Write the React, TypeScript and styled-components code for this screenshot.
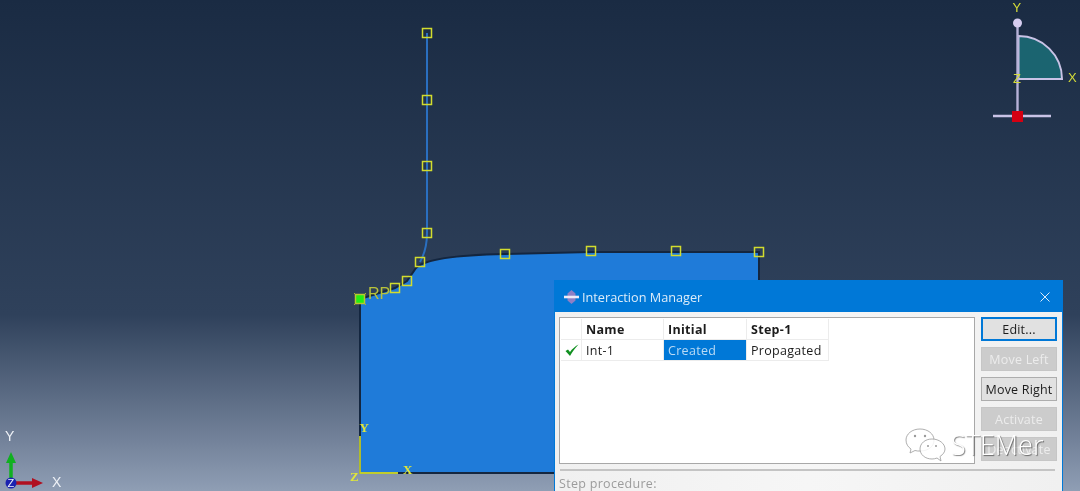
import React from "react";
import styled, { createGlobalStyle } from "styled-components";

const GlobalStyle = createGlobalStyle`
  html, body {
    margin: 0;
    padding: 0;
    width: 100%;
    height: 100%;
    overflow: hidden;
  }
  #root {
    width: 100%;
    height: 100%;
  }
`;

const Viewport = styled.div`
  position: relative;
  width: 1080px;
  height: 491px;
  overflow: hidden;
  font-family: "Open Sans", "Noto Sans", sans-serif;
  filter: blur(0.4px);
  background: linear-gradient(180deg, #1a2b43 0%, #2f415b 64%, #74839b 90%, #8f9eb4 100%);
`;

const ModelCanvas = styled.svg`
  position: absolute;
  left: 0;
  top: 0;
  width: 1080px;
  height: 491px;
`;

const Dialog = styled.div`
  position: absolute;
  left: 554px;
  top: 280px;
  width: 509px;
  height: 211px;
  display: flex;
  flex-direction: column;
  background: #f0f0f0;
  border: 1px solid #0078d7;
  border-bottom: none;
  box-sizing: border-box;
`;

const TitleBar = styled.div`
  height: 31px;
  flex: none;
  display: flex;
  align-items: center;
  padding: 0 12px 0 9px;
  gap: 3px;
  background: #0078d7;
  color: #dcecf9;
  font-size: 12.7px;
`;

const TitleText = styled.span`
  flex: 1;
`;

const Body = styled.div`
  flex: 1;
  display: flex;
  flex-direction: column;
  padding: 5px 5px 0 4px;
  background: linear-gradient(90deg, #f0f0f0, #f6f6f6 50%, #f0f0f0);
`;

const MainRow = styled.div`
  display: flex;
  gap: 6px;
  height: 147px;
`;

const TablePanel = styled.div`
  width: 416px;
  box-sizing: border-box;
  background: #fff;
  border: 1px solid #a8a8a8;
  padding: 1px;
`;

const Grid = styled.div`
  display: grid;
  grid-template-columns: 21px 82px 83px 82px;
  grid-auto-rows: 21px;
  width: max-content;
  font-size: 12.5px;
  color: #1c1c1c;
`;

const Cell = styled.div<{ $head?: boolean; $selected?: boolean }>`
  display: flex;
  align-items: center;
  padding-left: 4px;
  box-sizing: border-box;
  border-right: 1px solid #ececec;
  border-bottom: 1px solid #ececec;
  font-weight: ${({ $head }) => ($head ? 700 : 400)};
  background: ${({ $selected }) => ($selected ? "#0078d7" : "#fff")};
  color: ${({ $selected }) => ($selected ? "#b9daf5" : "#1c1c1c")};
  letter-spacing: 0.3px;
`;

const ButtonColumn = styled.div`
  width: 76px;
  display: flex;
  flex-direction: column;
  gap: 6px;
`;

const ActionButton = styled.div<{ $disabled?: boolean; $focused?: boolean }>`
  height: 24px;
  box-sizing: border-box;
  display: flex;
  align-items: center;
  justify-content: center;
  font-size: 12.5px;
  letter-spacing: 0.2px;
  white-space: nowrap;
  background: ${({ $disabled }) => ($disabled ? "#cccccc" : "#e1e1e1")};
  color: ${({ $disabled }) => ($disabled ? "#ececec" : "#1c1c1c")};
  border: ${({ $focused, $disabled }) =>
    $focused ? "2px solid #0078d7" : $disabled ? "1px solid #c6c6c6" : "1px solid #adadad"};
`;

const Divider = styled.div`
  height: 2px;
  margin: 5px 2px 0 1px;
  background: #c4c4c4;
`;

const StepLabel = styled.div`
  margin-top: 4px;
  font-size: 12.5px;
  color: #9c9c9c;
  letter-spacing: 0.3px;
`;

const Watermark = styled.div`
  position: absolute;
  left: 905px;
  top: 426px;
  display: flex;
  align-items: center;
  gap: 4px;
  color: #fff;
  font-family: "Open Sans", sans-serif;
  font-weight: 300;
  font-size: 27px;
  text-shadow: 1px 1px 1px rgba(0, 0, 0, 0.5);
`;

const handles: [number, number][] = [
  [427, 33],
  [427, 100],
  [427, 166],
  [427, 233],
  [420, 262],
  [407, 281],
  [395, 288],
  [505, 254],
  [591, 251],
  [676, 251],
  [759, 252],
];

function Model() {
  return (
    <ModelCanvas viewBox="0 0 1080 491">
      {/* part */}
      <path
        d="M360 473 L360 299 L395 288 L407 281 L416 268 C424 260 450 255 505 254 L591 252 L759 252 L759 300 L759 473 Z"
        fill="#1f7bd9"
        stroke="#14263f"
        strokeWidth="2"
      />
      <path d="M427 33 L427 233 C427 245 424 255 420 262" fill="none" stroke="#2a6fc0" strokeWidth="2" />

      {/* datum csys */}
      <path d="M360 436 L360 473 L398 473" fill="none" stroke="#c0cc2c" strokeWidth="1.8" />
      <g fontFamily="'Liberation Serif', serif" fontWeight="700" fontSize="13" fill="#dfe63c">
        <text x="359.5" y="432">Y</text>
        <text x="403" y="474">X</text>
        <text x="350" y="481">Z</text>
      </g>

      {/* reference point and handles */}
      <g stroke="#d2dc2e" strokeWidth="1.5" fill="none">
        {handles.map(([x, y]) => (
          <rect key={`${x}-${y}`} x={x - 4.5} y={y - 4.5} width="9" height="9" />
        ))}
        <path d="M354 293 L366 305 M366 293 L354 305" strokeWidth="1" stroke="#a8b030" />
        <rect x="355.5" y="294.5" width="9" height="9" fill="#22ee14" stroke="#b8c830" />
      </g>
      <text x="368" y="299" fontFamily="'Liberation Sans', sans-serif" fontSize="16" fill="#b8c23a">RP</text>

      {/* view triad, top right */}
      <path
        d="M1018.5 36 A43.5 43 0 0 1 1062 79 L1018.5 79 Z"
        fill="#1b6470"
        stroke="#c9c3e6"
        strokeWidth="2"
      />
      <path d="M1017.5 23 L1017.5 116" stroke="#b7b2d8" strokeWidth="2.4" />
      <path d="M993 116 L1051 116" stroke="#c9c3e6" strokeWidth="2.4" />
      <circle cx="1017.5" cy="23" r="4.5" fill="#d6cdf0" />
      <rect x="1012" y="111" width="11" height="11" fill="#d40012" />
      <g fontFamily="'Liberation Sans', sans-serif" fontSize="13" fill="#d4dc38">
        <text x="1012.5" y="12">Y</text>
        <text x="1013" y="83">Z</text>
        <text x="1068" y="82">X</text>
      </g>

      {/* global triad, bottom left */}
      <path d="M11 478 L11 461" stroke="#10b020" strokeWidth="3.5" />
      <path d="M11 452 L16 463 L6 463 Z" fill="#10b020" />
      <path d="M16 483 L34 483" stroke="#b01020" strokeWidth="3.5" />
      <path d="M43 483 L32 478 L32 488 Z" fill="#b01020" />
      <circle cx="11" cy="483" r="5.5" fill="#1a22b0" />
      <g fontFamily="'Liberation Sans', sans-serif" fill="#eef1f6">
        <text x="5" y="441" fontSize="14">Y</text>
        <text x="52" y="487" fontSize="14">X</text>
        <text x="7.5" y="487" fontSize="11">Z</text>
      </g>
    </ModelCanvas>
  );
}

function DialogIcon() {
  return (
    <svg width="15" height="16" viewBox="0 0 15 16">
      <path d="M7.5 1 L11.5 4.5 L11.5 11.5 L7.5 15 L3.5 11.5 L3.5 4.5 Z" fill="#8f7fc4" />
      <path d="M0 8 L15 8" stroke="#efeaf8" strokeWidth="2.6" />
    </svg>
  );
}

function WeChatMark() {
  return (
    <svg width="42" height="36" viewBox="0 0 42 36">
      <g fill="rgba(255,255,255,0.85)" stroke="#9a9a9a" strokeWidth="0.8">
        <path d="M15 2 C7 2 1 7 1 13 C1 17 3 20 6 22 L5 26 L10 23.5 C12 24 13.5 24.2 15 24 C24 24 29 19 29 13 C29 7 23 2 15 2 Z" />
        <path d="M27 12 C20 12 15 16.5 15 22 C15 27.5 20 32 27 32 C29 32 30 31.7 32 31 L36 34 L35 29.5 C38 27.5 40 25 40 22 C40 16.5 34 12 27 12 Z" />
      </g>
      <g fill="#9a9a9a">
        <circle cx="10" cy="9" r="1.2" />
        <circle cx="20" cy="9" r="1.2" />
        <circle cx="23" cy="19" r="1" />
        <circle cx="31" cy="19" r="1" />
      </g>
    </svg>
  );
}

function App() {
  return (
    <Viewport>
      <GlobalStyle />
      <Model />
      <Dialog>
        <TitleBar>
          <DialogIcon />
          <TitleText>Interaction Manager</TitleText>
          <svg width="10" height="10" viewBox="0 0 10 10">
            <path d="M0.5 0.5 L9.5 9.5 M9.5 0.5 L0.5 9.5" stroke="#dcecf9" strokeWidth="1" />
          </svg>
        </TitleBar>
        <Body>
          <MainRow>
            <TablePanel>
              <Grid>
                <Cell $head />
                <Cell $head>Name</Cell>
                <Cell $head>Initial</Cell>
                <Cell $head>Step-1</Cell>
                <Cell>
                  <svg width="14" height="13" viewBox="0 0 14 13">
                    <path d="M0.5 7 L3 5.5 L5 8 C7 5 10 2.5 13.5 0.5 C10.5 3.5 7.5 7.5 5 12 Z" fill="#109020" />
                  </svg>
                </Cell>
                <Cell>Int-1</Cell>
                <Cell $selected>Created</Cell>
                <Cell>Propagated</Cell>
              </Grid>
            </TablePanel>
            <ButtonColumn>
              <ActionButton $focused>Edit...</ActionButton>
              <ActionButton $disabled>Move Left</ActionButton>
              <ActionButton>Move Right</ActionButton>
              <ActionButton $disabled>Activate</ActionButton>
              <ActionButton $disabled>Deactivate</ActionButton>
            </ButtonColumn>
          </MainRow>
          <Divider />
          <StepLabel>Step procedure:</StepLabel>
        </Body>
      </Dialog>
      <Watermark>
        <WeChatMark />
        <span>STEMer</span>
      </Watermark>
    </Viewport>
  );
}

export default App;
